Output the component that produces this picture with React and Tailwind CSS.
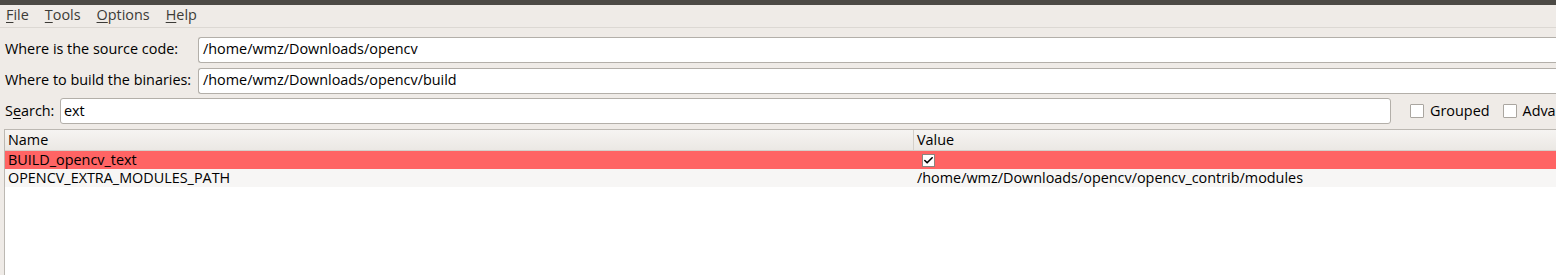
import { Check } from 'lucide-react'

const font = { fontFamily: '"Open Sans", "Noto Sans", sans-serif' }

function MenuItem({ first, rest }) {
  return (
    <span className="px-[5px] text-[#3c3b37]">
      <span className="underline underline-offset-2">{first}</span>{rest}
    </span>
  )
}

function PathRow({ label, value }) {
  return (
    <div className="flex items-center h-[31px] pl-[5px]">
      <div className="w-[193px] shrink-0 text-black">{label}</div>
      <div className="flex-1 h-[26px] flex items-center pl-[4px] bg-white border border-[#b3afa9] rounded-l-[3px] border-r-0 text-black">
        {value}
      </div>
    </div>
  )
}

function Box({ label }) {
  return (
    <label className="flex items-center gap-[6px] text-black">
      <span className="w-[14px] h-[14px] bg-white border border-[#aaa6a0] rounded-[1px]" />
      {label}
    </label>
  )
}

export default function App() {
  const rows = [
    { name: 'BUILD_opencv_text', check: true, bg: 'bg-[#ff6464]' },
    { name: 'OPENCV_EXTRA_MODULES_PATH', value: '/home/wmz/Downloads/opencv/opencv_contrib/modules', bg: 'bg-[#f7f6f5]' },
  ]
  return (
    <div className="w-[1556px] h-[275px] overflow-hidden bg-[#efebe7] text-[14.4px] leading-none whitespace-nowrap" style={font}>
      <div className="h-[5px] bg-[#4c4a45]" />
      <div className="h-[23px] flex items-center border-b border-[#dcd8d3] pb-[1px] pl-[1px]">
        <MenuItem first="F" rest="ile" />
        <span className="w-[6px]" />
        <MenuItem first="T" rest="ools" />
        <span className="w-[6px]" />
        <MenuItem first="O" rest="ptions" />
        <span className="w-[6px]" />
        <MenuItem first="H" rest="elp" />
      </div>
      <div className="pt-[6px]">
        <PathRow label="Where is the source code:" value="/home/wmz/Downloads/opencv" />
        <PathRow label="Where to build the binaries:" value="/home/wmz/Downloads/opencv/build" />
      </div>
      <div className="flex items-center h-[30px] pl-[5px]">
        <div className="w-[55px] shrink-0 text-black">S<span className="underline underline-offset-2">e</span>arch:</div>
        <div className="w-[1331px] shrink-0 h-[26px] flex items-center pl-[3px] bg-white border border-[#b3afa9] rounded-[3px] text-black">ext</div>
        <div className="ml-[19px] flex items-center gap-[13px]">
          <Box label="Grouped" />
          <Box label="Advanced" />
        </div>
      </div>
      <div className="ml-[4px] mt-[3px] h-[200px] bg-white border-l border-t border-[#bcb8b2]">
        <div className="flex h-[21px] bg-gradient-to-b from-[#f6f4f2] to-[#ebe8e4] border-b border-[#d4d0ca] text-black">
          <div className="w-[909px] flex items-center pl-[3px] border-r border-[#d4d0ca]">Name</div>
          <div className="flex-1 flex items-center pl-[3px]">Value</div>
        </div>
        {rows.map(r => (
          <div key={r.name} className={`flex h-[18px] items-center text-black ${r.bg}`}>
            <div className="w-[910px] pl-[3px]">{r.name}</div>
            <div className="flex-1 pl-[2px]">
              {r.check ? (
                <span className="ml-[5px] w-[13px] h-[13px] bg-white border border-[#8a8680] flex items-center justify-center">
                  <Check size={11} strokeWidth={3.5} className="text-black" />
                </span>
              ) : r.value}
            </div>
          </div>
        ))}
      </div>
    </div>
  )
}
